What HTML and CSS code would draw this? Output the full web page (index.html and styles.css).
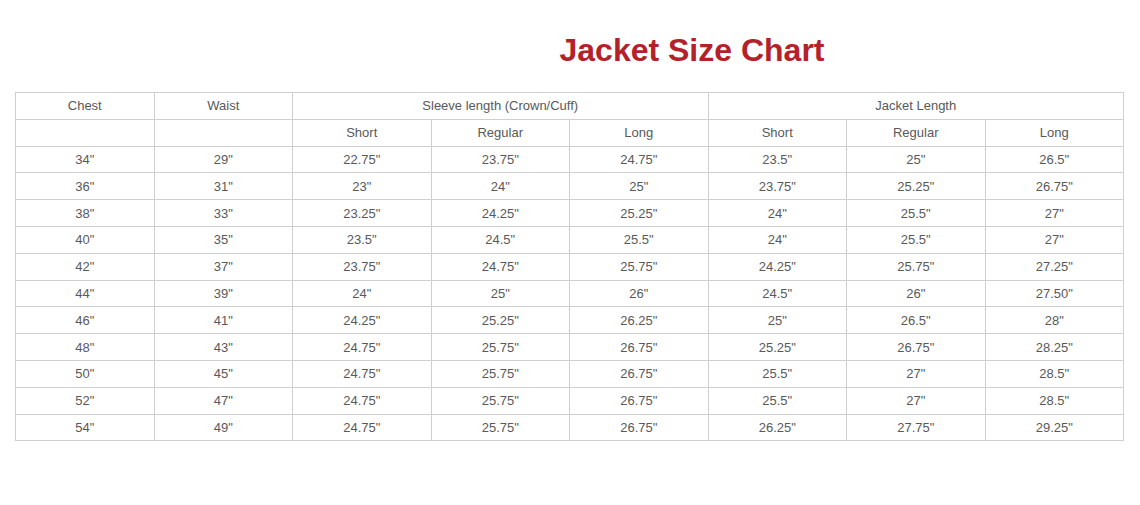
FILE: index.html
```html
<!DOCTYPE html>
<html>
<head>
<meta charset="utf-8">
<link rel="stylesheet" href="styles.css">
</head>
<body>
<div class="page">
  <h1 class="title">Jacket Size Chart</h1>
  <table class="chart">
    <colgroup>
      <col><col><col><col><col><col><col><col>
    </colgroup>
    <tr><td>Chest</td><td>Waist</td><td colspan="3">Sleeve length (Crown/Cuff)</td><td colspan="3">Jacket Length</td></tr>
    <tr><td></td><td></td><td>Short</td><td>Regular</td><td>Long</td><td>Short</td><td>Regular</td><td>Long</td></tr>
    <tr><td>34"</td><td>29"</td><td>22.75"</td><td>23.75"</td><td>24.75"</td><td>23.5"</td><td>25"</td><td>26.5"</td></tr>
    <tr><td>36"</td><td>31"</td><td>23"</td><td>24"</td><td>25"</td><td>23.75"</td><td>25.25"</td><td>26.75"</td></tr>
    <tr><td>38"</td><td>33"</td><td>23.25"</td><td>24.25"</td><td>25.25"</td><td>24"</td><td>25.5"</td><td>27"</td></tr>
    <tr><td>40"</td><td>35"</td><td>23.5"</td><td>24.5"</td><td>25.5"</td><td>24"</td><td>25.5"</td><td>27"</td></tr>
    <tr><td>42"</td><td>37"</td><td>23.75"</td><td>24.75"</td><td>25.75"</td><td>24.25"</td><td>25.75"</td><td>27.25"</td></tr>
    <tr><td>44"</td><td>39"</td><td>24"</td><td>25"</td><td>26"</td><td>24.5"</td><td>26"</td><td>27.50"</td></tr>
    <tr><td>46"</td><td>41"</td><td>24.25"</td><td>25.25"</td><td>26.25"</td><td>25"</td><td>26.5"</td><td>28"</td></tr>
    <tr><td>48"</td><td>43"</td><td>24.75"</td><td>25.75"</td><td>26.75"</td><td>25.25"</td><td>26.75"</td><td>28.25"</td></tr>
    <tr><td>50"</td><td>45"</td><td>24.75"</td><td>25.75"</td><td>26.75"</td><td>25.5"</td><td>27"</td><td>28.5"</td></tr>
    <tr><td>52"</td><td>47"</td><td>24.75"</td><td>25.75"</td><td>26.75"</td><td>25.5"</td><td>27"</td><td>28.5"</td></tr>
    <tr><td>54"</td><td>49"</td><td>24.75"</td><td>25.75"</td><td>26.75"</td><td>26.25"</td><td>27.75"</td><td>29.25"</td></tr>
  </table>
</div>
</body>
</html>
```
FILE: styles.css
```css
html, body {
  margin: 0;
  padding: 0;
  background: #ffffff;
}
.page {
  padding: 30px 0 0 15px;
}
.title {
  margin: 0 0 22px 229px;
  font-family: "Liberation Sans", Arial, sans-serif;
  font-weight: bold;
  font-size: 32px;
  line-height: 40px;
  color: #b3222b;
  text-align: center;
}
.chart {
  width: 1109px;
  table-layout: fixed;
  border-collapse: collapse;
  font-family: "Liberation Sans", Arial, sans-serif;
  font-size: 13px;
  color: #595959;
}
.chart tr {
  height: 26.8px;
}
.chart td {
  border: 1px solid #cfcfcf;
  padding: 0;
  text-align: center;
  vertical-align: middle;
}
```
